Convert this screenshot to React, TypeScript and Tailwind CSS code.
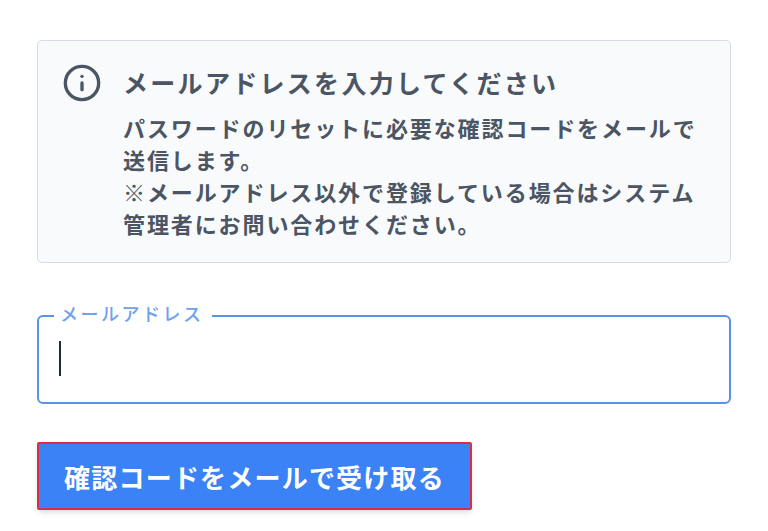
import { Info } from "lucide-react";

const font = "[font-family:'Noto_Sans_CJK_JP','Noto_Sans',sans-serif]";

export default function App() {
  return (
    <div className={`${font} h-[531px] w-[768px] overflow-hidden bg-white pl-[37px] pr-[37px] pt-10`}>
      <div className="flex h-[223px] gap-[20px] rounded-[5px] border border-[#d5dce6] bg-[#f8fafc] pl-[24px] pr-4 pt-[22px]">
        <Info className="h-[40px] w-[40px] shrink-0 text-[#4b5563]" strokeWidth={2} aria-hidden />
        <div className="min-w-0">
          <h1 className="-mt-[1px] ml-[1px] text-[25px] font-bold leading-[40px] tracking-[2.3px] text-[#4b5563]">
            メールアドレスを入力してください
          </h1>
          <p className="ml-[1px] mt-[9px] w-[590px] text-[22px] font-bold leading-[32px] tracking-[1.9px] text-[#4b5563]">
            パスワードのリセットに必要な確認コードをメールで
            <br />
            送信します。
            <br />
            ※メールアドレス以外で登録している場合はシステム
            <br />
            管理者にお問い合わせください。
          </p>
        </div>
      </div>

      <fieldset className="mt-[38px] h-[103px] rounded-[6px] border-2 border-[#5b93e6] pl-[21px] pr-4">
        <legend className="-ml-[6px] pb-[6px] pl-[6px] pr-[8px] text-[18px] font-medium leading-[24px] tracking-[2.5px] text-[#6da2ec]">
          メールアドレス
        </legend>
        <div className="mt-[10px] h-[35px] w-[2px] -translate-x-[1px] bg-[#1f2937]" />
      </fieldset>

      <button className="mt-[38px] flex h-[68px] w-[435px] items-center justify-center rounded-[2px] border-2 border-[#d92d4a] bg-[#3b82f6] text-[26px] font-bold tracking-[1.2px] text-white shadow-md">
        確認コードをメールで受け取る
      </button>
    </div>
  );
}
